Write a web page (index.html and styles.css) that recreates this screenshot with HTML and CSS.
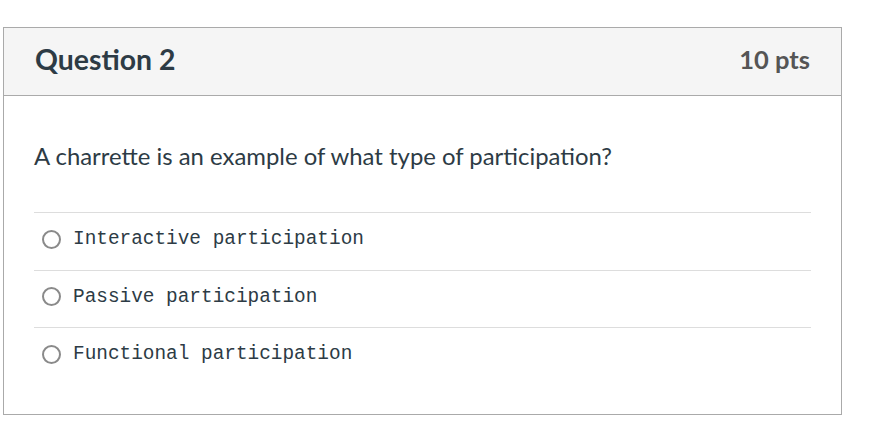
FILE: index.html
```html
<!DOCTYPE html>
<html>
<head>
<meta charset="utf-8">
<link rel="stylesheet" href="styles.css">
</head>
<body>
<div class="question">
  <div class="header">
    <h2 class="name">Question 2</h2>
    <span class="points">10 pts</span>
  </div>
  <div class="content">
    <p class="text">A charrette is an example of what type of participation?</p>
    <ul class="answers">
      <li class="answer"><span class="radio"></span><span class="label">Interactive participation</span></li>
      <li class="answer"><span class="radio"></span><span class="label">Passive participation</span></li>
      <li class="answer"><span class="radio"></span><span class="label">Functional participation</span></li>
    </ul>
  </div>
</div>
</body>
</html>
```
FILE: styles.css
```css
html, body {
  margin: 0;
  padding: 0;
  background: #fff;
}
body {
  padding: 27px 0 0 3px;
  font-family: Lato, "Liberation Sans", sans-serif;
  color: #2d3b45;
}
.question {
  width: 837px;
  border: 1px solid #aaaaaa;
  box-sizing: content-box;
}
.header {
  display: flex;
  align-items: center;
  justify-content: space-between;
  height: 61px;
  padding: 0 31px 6px;
  background: #f5f5f5;
  border-bottom: 1px solid #aaaaaa;
}
.name {
  margin: 0;
  font-size: 28.4px;
  line-height: 32px;
  font-weight: 700;
  color: #2d3b45;
}
.points {
  font-size: 25.5px;
  line-height: 32px;
  font-weight: 700;
  color: #555555;
}
.content {
  padding: 0 30px 29.5px;
}
.text {
  margin: 0;
  padding: 46px 0 0;
  height: 70px;
  font-size: 23.9px;
  line-height: 28px;
}
.answers {
  list-style: none;
  margin: 0;
  padding: 0;
}
.answer {
  display: flex;
  align-items: center;
  height: 52.5px;
  padding-bottom: 4px;
  border-top: 1px solid #dddddd;
}
.radio {
  width: 15px;
  height: 15px;
  border: 2px solid #8a8a8a;
  border-radius: 50%;
  margin: 0 12px 0 8px;
  box-sizing: content-box;
}
.label {
  font-family: "Liberation Mono", "Courier New", monospace;
  font-size: 19.4px;
  color: #2d3b45;
}
```
